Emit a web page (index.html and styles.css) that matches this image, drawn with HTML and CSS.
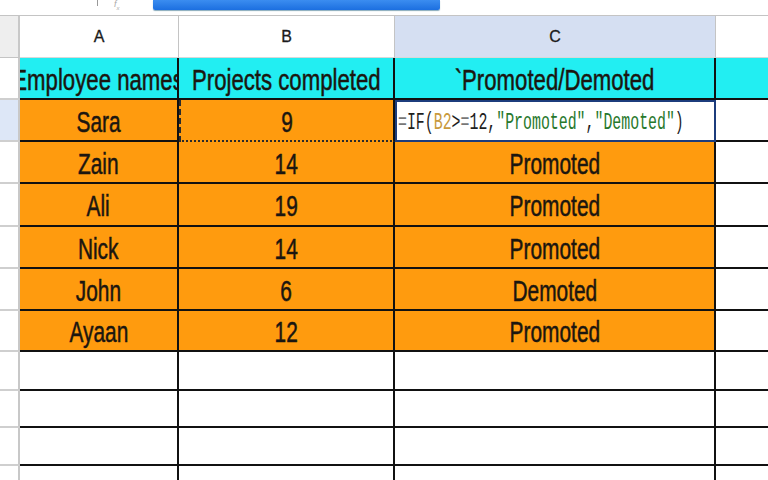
FILE: index.html
```html
<!DOCTYPE html>
<html>
<head>
<meta charset="utf-8">
<link rel="stylesheet" href="styles.css">
</head>
<body>
<div class="topbar">
  <span class="tick"></span>
  <span class="fx">f<sub>x</sub></span>
  <div class="bluebar"></div>
</div>
<div class="sheet">
  <div class="rh corner"></div>
  <div class="ch">A</div>
  <div class="ch">B</div>
  <div class="ch sel">C</div>
  <div class="ch last"></div>

  <div class="rh"></div>
  <div class="c head"><span class="t">Employee names</span></div>
  <div class="c head"><span class="t">Projects completed</span></div>
  <div class="c head"><span class="t">`Promoted/Demoted</span></div>
  <div class="c head last"></div>

  <div class="rh active"></div>
  <div class="c data"><span class="t">Sara</span></div>
  <div class="c data copy"><span class="t">9</span></div>
  <div class="c edit"><span class="f"><span class="g">=</span>IF(<span class="ref">B2</span>&gt;<span class="g">=</span>12,<span class="s">"Promoted"</span>,<span class="s">"Demoted"</span>)</span></div>
  <div class="c last"></div>

  <div class="rh"></div>
  <div class="c data"><span class="t">Zain</span></div>
  <div class="c data"><span class="t">14</span></div>
  <div class="c data"><span class="t">Promoted</span></div>
  <div class="c last"></div>

  <div class="rh"></div>
  <div class="c data"><span class="t">Ali</span></div>
  <div class="c data"><span class="t">19</span></div>
  <div class="c data"><span class="t">Promoted</span></div>
  <div class="c last"></div>

  <div class="rh"></div>
  <div class="c data"><span class="t">Nick</span></div>
  <div class="c data"><span class="t">14</span></div>
  <div class="c data"><span class="t">Promoted</span></div>
  <div class="c last"></div>

  <div class="rh"></div>
  <div class="c data"><span class="t">John</span></div>
  <div class="c data"><span class="t">6</span></div>
  <div class="c data"><span class="t">Demoted</span></div>
  <div class="c last"></div>

  <div class="rh"></div>
  <div class="c data"><span class="t">Ayaan</span></div>
  <div class="c data"><span class="t">12</span></div>
  <div class="c data"><span class="t">Promoted</span></div>
  <div class="c last"></div>

  <div class="rh"></div><div class="c"></div><div class="c"></div><div class="c"></div><div class="c last"></div>
  <div class="rh"></div><div class="c"></div><div class="c"></div><div class="c"></div><div class="c last"></div>
  <div class="rh"></div><div class="c"></div><div class="c"></div><div class="c"></div><div class="c last"></div>
  <div class="rh"></div><div class="c"></div><div class="c"></div><div class="c"></div><div class="c last"></div>
</div>
</body>
</html>
```
FILE: styles.css
```css
* { box-sizing: border-box; }
html, body { margin: 0; padding: 0; background: #fff; overflow: hidden; }
body { width: 768px; height: 480px; font-family: "Liberation Sans", Arial, sans-serif; }

.topbar {
  height: 16px;
  border-bottom: 1px solid #c4c4c4;
  background: #fff;
  display: flex;
  align-items: flex-start;
}
.tick { width: 1px; height: 6px; background: #999; margin-left: 97px; }
.fx { font-size: 9px; color: #aaa; margin-left: 16px; line-height: 8px; font-style: italic; }
.fx sub { font-size: 6px; }
.bluebar {
  margin-left: 33px;
  width: 287px;
  height: 10px;
  background: linear-gradient(#3b8df0, #1c6fe0);
  border-radius: 0 0 2px 2px;
  box-shadow: 0 1px 1px #8ab;
}

.sheet {
  display: grid;
  grid-template-columns: 20px 159px 216px 321px 1fr;
  grid-template-rows: 42px 42px 42px 42px 43px 42px 42px 41px 39px 37px 38px 38px;
}

.rh {
  background: #fff;
  border-right: 2px solid #c8c8c8;
  border-bottom: 2px solid #cfcfcf;
}
.rh.corner { background: #eeeeee; border-bottom: 1px solid #c4c4c4; }
.rh.active { background: #dde7f7; }

.ch {
  display: flex;
  align-items: center;
  justify-content: center;
  font-size: 16px;
  color: #1a1a1a;
  background: #fff;
  border-right: 1px solid #c4c4c4;
  border-bottom: 1px solid #d8d8d8;
  -webkit-text-stroke: 0.3px #1a1a1a;
}
.ch.sel { background: #d5dff2; }
.ch.last { border-right: 0; }

.c {
  border-right: 2px solid #111;
  border-bottom: 2px solid #111;
  overflow: hidden;
  display: flex;
  align-items: center;
  justify-content: center;
  white-space: nowrap;
  color: #1b1610;
  font-size: 29px;
  padding-top: 4px;
  -webkit-text-stroke: 0.5px #1b1610;
}
.c.last { border-right: 0; }
.head { background: #22eef2; }
.data { background: #ff9b0e; }

.t { display: inline-block; transform: scaleX(0.72); flex-shrink: 0; }
.head .t { transform: scaleX(0.765); }

.copy { border-left: 2px dashed #2a2a2a; border-bottom: 2px dotted #2a2a2a; }

.edit {
  background: #fff;
  border: 2px solid #1c3c7c;
  justify-content: flex-start;
  padding-left: 1px;
  padding-top: 2px;
  -webkit-text-stroke: 0;
}
.f {
  display: inline-block;
  flex-shrink: 0;
  font-family: "Liberation Mono", "DejaVu Sans Mono", monospace;
  font-size: 24px;
  color: #1e1e1e;
  transform: scaleX(0.62);
  transform-origin: left center;
}
.f .g { color: #777; }
.f .ref { color: #c99a3c; }
.f .s { color: #27782c; }
```
